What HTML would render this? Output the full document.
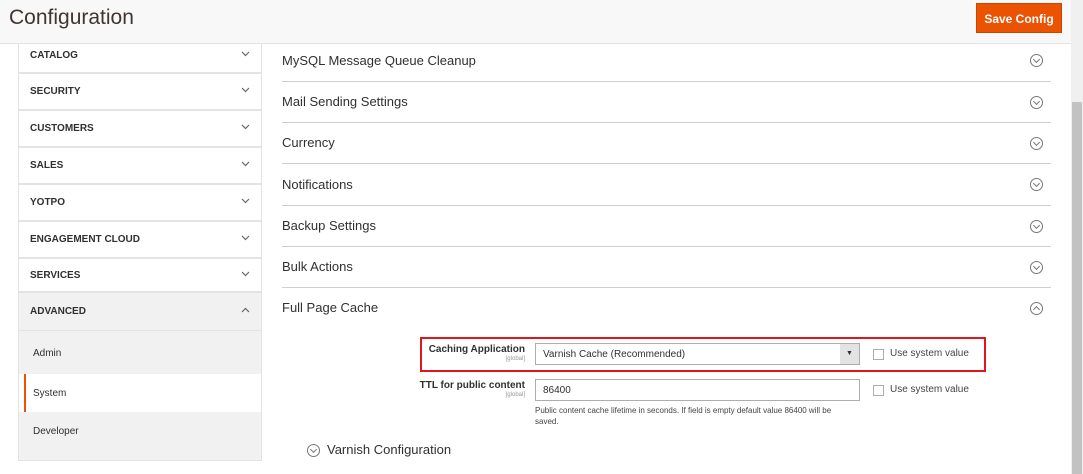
<!DOCTYPE html>
<html><head><style>
*{margin:0;padding:0;box-sizing:border-box}
body{width:1083px;height:474px;overflow:hidden;background:#fff;font-family:"Liberation Sans",sans-serif;color:#333;position:relative}
.hdr{position:absolute;left:0;top:0;width:1071px;height:44px;background:#f8f8f8;border-bottom:1px solid #e3e3e3}
.hdr h1{position:absolute;left:9px;top:6px;font-weight:normal;font-size:21px;color:#41362f}
.btn{position:absolute;left:976px;top:3px;width:86px;height:30px;background:#eb5202;color:#fff;font-weight:bold;font-size:12px;text-align:center;line-height:30px;border:1px solid #c94500}
.sb{position:absolute;left:1071px;top:0;width:12px;height:474px;background:#f0f0f0}
.sb div{position:absolute;left:1px;top:102px;width:10px;height:372px;background:#c2c2c2}
.side{position:absolute;left:18px;top:44px;width:244px;height:417px;border:1px solid #e3e3e3;border-top:none;background:#fff;overflow:hidden}
.it{position:absolute;left:0;width:243px;border-bottom:2px solid #e3e3e3;font-weight:bold;font-size:10px;color:#303030;padding-left:11px}
.it svg{position:absolute;right:12px}
.sub{position:absolute;left:0;width:243px;font-size:10px;color:#303030;padding-left:14px}
.main .t{position:absolute;left:282px;font-size:13px;color:#303030}
.main .l{position:absolute;left:282px;width:769px;height:1px;background:#cfcfcf}
.ic{position:absolute;left:1030px;width:13px;height:13px;border:1px solid #777;border-radius:50%}
.ic:after{content:"";position:absolute;left:3px;top:2px;width:4px;height:4px;border-right:1px solid #777;border-bottom:1px solid #777;transform:rotate(45deg)}
.ic.up:after{top:4px;transform:rotate(-135deg)}
.lab{position:absolute;width:106px;left:419px;text-align:right;font-size:10px;font-weight:bold;color:#303030}
.lab small{display:block;font-size:6px;color:#999;font-weight:normal;margin-top:1px}
.inp{position:absolute;left:535px;width:325px;height:22px;border:1px solid #adadad;font-size:10px;color:#303030;padding:5px 7px}
.cb{position:absolute;left:873px;width:11px;height:11px;border:1px solid #adadad}
.cbl{position:absolute;left:890px;font-size:10px;color:#444}
</style></head><body>
<div class="hdr"><h1>Configuration</h1><div class="btn">Save Config</div></div>
<div class="sb"><div></div></div>
<div class="side">
<div class="it" style="top:0;height:30px;padding-top:6px">CATALOG<svg style="top:7px" width="9" height="6"><polyline points="1,1 4.5,4.5 8,1" fill="none" stroke="#666" stroke-width="1.2"/></svg></div>
<div class="it" style="top:30px;height:37px;padding-top:12px">SECURITY<svg style="top:13px" width="9" height="6"><polyline points="1,1 4.5,4.5 8,1" fill="none" stroke="#666" stroke-width="1.2"/></svg></div>
<div class="it" style="top:67px;height:37px;padding-top:12px">CUSTOMERS<svg style="top:13px" width="9" height="6"><polyline points="1,1 4.5,4.5 8,1" fill="none" stroke="#666" stroke-width="1.2"/></svg></div>
<div class="it" style="top:104px;height:37px;padding-top:12px">SALES<svg style="top:13px" width="9" height="6"><polyline points="1,1 4.5,4.5 8,1" fill="none" stroke="#666" stroke-width="1.2"/></svg></div>
<div class="it" style="top:141px;height:37px;padding-top:12px">YOTPO<svg style="top:13px" width="9" height="6"><polyline points="1,1 4.5,4.5 8,1" fill="none" stroke="#666" stroke-width="1.2"/></svg></div>
<div class="it" style="top:178px;height:37px;padding-top:12px">ENGAGEMENT CLOUD<svg style="top:13px" width="9" height="6"><polyline points="1,1 4.5,4.5 8,1" fill="none" stroke="#666" stroke-width="1.2"/></svg></div>
<div class="it" style="top:215px;height:34px;padding-top:11px">SERVICES<svg style="top:12px" width="9" height="6"><polyline points="1,1 4.5,4.5 8,1" fill="none" stroke="#666" stroke-width="1.2"/></svg></div>
<div class="it" style="top:249px;height:38px;padding-top:13px;background:#f1f1f1;border-bottom:1px solid #e3e3e3">ADVANCED<svg style="top:14px" width="9" height="6"><polyline points="1,5 4.5,1.5 8,5" fill="none" stroke="#666" stroke-width="1.2"/></svg></div>
<div class="sub" style="top:287px;height:43px;padding-top:17px;background:#f1f1f1">Admin</div>
<div class="sub" style="top:330px;height:38px;padding-top:14px;background:#fff;border-left:2px solid #eb5202;left:5px;padding-left:7px">System</div>
<div class="sub" style="top:368px;height:48px;padding-top:14px;background:#f1f1f1">Developer</div>
</div>
<div class="main">
<div class="t" style="top:53px">MySQL Message Queue Cleanup</div><div class="ic" style="top:54px"></div><div class="l" style="top:81px"></div>
<div class="t" style="top:94px">Mail Sending Settings</div><div class="ic" style="top:96px"></div><div class="l" style="top:122px"></div>
<div class="t" style="top:135px">Currency</div><div class="ic" style="top:137px"></div><div class="l" style="top:163px"></div>
<div class="t" style="top:177px">Notifications</div><div class="ic" style="top:178px"></div><div class="l" style="top:205px"></div>
<div class="t" style="top:218px">Backup Settings</div><div class="ic" style="top:220px"></div><div class="l" style="top:246px"></div>
<div class="t" style="top:259px">Bulk Actions</div><div class="ic" style="top:261px"></div><div class="l" style="top:287px"></div>
<div class="t" style="top:300px">Full Page Cache</div><div class="ic up" style="top:302px"></div>
</div>
<div style="position:absolute;left:420px;top:337px;width:566px;height:35px;border:2px solid #e0161c"></div>
<div class="lab" style="top:344px">Caching Application<small>[global]</small></div>
<div class="inp" style="top:343px;background:#fff">Varnish Cache (Recommended)<div style="position:absolute;right:0;top:0;width:19px;height:20px;background:#e3e3e3;font-size:7px;text-align:center;line-height:20px">&#9660;</div></div>
<div class="cb" style="top:349px"></div><div class="cbl" style="top:348px">Use system value</div>
<div class="lab" style="top:380px">TTL for public content<small>[global]</small></div>
<div class="inp" style="top:379px">86400</div>
<div class="cb" style="top:385px"></div><div class="cbl" style="top:384px">Use system value</div>
<div style="position:absolute;left:535px;top:405px;width:320px;font-size:8px;color:#444;line-height:11px">Public content cache lifetime in seconds. If field is empty default value 86400 will be saved.</div>
<div class="ic" style="left:307px;top:444px"></div>
<div style="position:absolute;left:327px;top:442px;font-size:13px;color:#303030">Varnish Configuration</div>
</body></html>
